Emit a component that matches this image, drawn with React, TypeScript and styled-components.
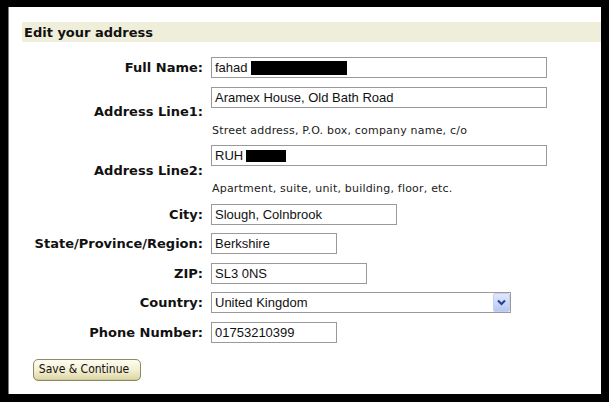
import { FC, ReactNode } from 'react'
import styled, { createGlobalStyle } from 'styled-components'

const GlobalStyle = createGlobalStyle`
  html, body {
    margin: 0;
    padding: 0;
    background: #000;
  }
`

const Frame = styled.div`
  margin: 7px 8px 8px 8px;
  height: 387px;
  box-sizing: border-box;
  background: #fff;
  border-left: 1px solid #7a7a7a;
  overflow: hidden;
`

const Heading = styled.h2`
  margin: 15px 0 0 13px;
  height: 20px;
  line-height: 21px;
  padding-left: 2px;
  background: #efeedb;
  font-family: 'DejaVu Sans', Verdana, sans-serif;
  font-size: 13px;
  font-weight: bold;
  color: #111;
`

const Form = styled.div`
  margin-top: 15px;
  display: grid;
  grid-template-columns: 194px auto;
  column-gap: 8px;
  row-gap: 8.5px;
  align-items: center;
`

const Label = styled.div`
  text-align: right;
  font-family: 'DejaVu Sans', Verdana, sans-serif;
  font-size: 13px;
  font-weight: bold;
  color: #111;
  white-space: nowrap;
`

const Cell = styled.div`
  display: flex;
  flex-direction: column;
  align-items: flex-start;
`

const Field = styled.div<{ $w: number }>`
  width: ${p => p.$w}px;
  height: 21px;
  box-sizing: border-box;
  border: 1px solid #9a9a9a;
  padding-left: 3px;
  font-family: 'Liberation Sans', Arial, sans-serif;
  font-size: 13px;
  line-height: 19px;
  color: #111;
  white-space: nowrap;
  display: flex;
  align-items: center;
`

const Redact = styled.span<{ $w: number; $h: number }>`
  display: inline-block;
  width: ${p => p.$w}px;
  height: ${p => p.$h}px;
  background: #000;
`

const Hint = styled.div`
  margin-top: 17px;
  margin-left: 1px;
  font-family: 'DejaVu Sans', Verdana, sans-serif;
  font-size: 11px;
  letter-spacing: 0.2px;
  line-height: 12px;
  color: #222;
`

const SelectBox = styled(Field)`
  justify-content: space-between;
  padding-right: 0;
`

const ArrowBtn = styled.span`
  width: 17px;
  height: 19px;
  box-sizing: border-box;
  border: 1px solid #c2d1f0;
  border-radius: 2px;
  background: linear-gradient(#dfe8fd, #b7c9f3);
  display: flex;
  align-items: center;
  justify-content: center;
`

const SaveButton = styled.button`
  margin: 16px 0 0 24px;
  width: 108px;
  height: 22px;
  padding: 0 6px 1px 0;
  border: 1px solid #8e8a63;
  border-radius: 5px;
  background: linear-gradient(#fefdf1, #f3efd2 50%, #ddd6a6);
  box-shadow: inset 0 -1px 0 #cfc796;
  font-family: 'DejaVu Sans Condensed', 'Liberation Sans Narrow', 'Liberation Sans', Arial, sans-serif;
  font-stretch: condensed;
  font-size: 12px;
  color: #111;
`

interface IRowProps {
  label: string
  hint?: string
  children: ReactNode
}

const Row: FC<IRowProps> = ({ label, hint, children }) => (
  <>
    <Label>{label}</Label>
    <Cell>
      {children}
      {hint && <Hint>{hint}</Hint>}
    </Cell>
  </>
)

const Chevron = () => (
  <svg width="9" height="7" viewBox="0 0 9 7">
    <path d="M1 1.5 L4.5 5 L8 1.5" fill="none" stroke="#2a3f8a" strokeWidth="2" />
  </svg>
)

const App: FC = () => (
  <>
    <GlobalStyle />
    <Frame>
      <Heading>Edit your address</Heading>
      <Form>
        <Row label="Full Name:">
          <Field $w={336}>fahad&nbsp;<Redact $w={96} $h={14} /></Field>
        </Row>
        <Row label="Address Line1:" hint="Street address, P.O. box, company name, c/o">
          <Field $w={336}>Aramex House, Old Bath Road</Field>
        </Row>
        <Row label="Address Line2:" hint="Apartment, suite, unit, building, floor, etc.">
          <Field $w={336}>RUH<Redact $w={40} $h={12} style={{ marginLeft: 3 }} /></Field>
        </Row>
        <Row label="City:">
          <Field $w={186}>Slough, Colnbrook</Field>
        </Row>
        <Row label="State/Province/Region:">
          <Field $w={126}>Berkshire</Field>
        </Row>
        <Row label="ZIP:">
          <Field $w={156}>SL3 0NS</Field>
        </Row>
        <Row label="Country:">
          <SelectBox $w={300}>
            United Kingdom
            <ArrowBtn><Chevron /></ArrowBtn>
          </SelectBox>
        </Row>
        <Row label="Phone Number:">
          <Field $w={126}>01753210399</Field>
        </Row>
      </Form>
      <SaveButton>Save &amp; Continue</SaveButton>
    </Frame>
  </>
)

export default App
